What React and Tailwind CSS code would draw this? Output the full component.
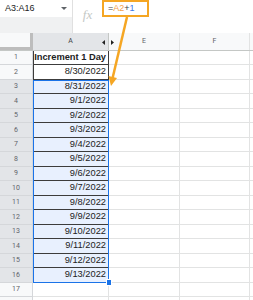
const DATES = [
  '8/30/2022', '8/31/2022', '9/1/2022', '9/2/2022', '9/3/2022', '9/4/2022', '9/5/2022',
  '9/6/2022', '9/7/2022', '9/8/2022', '9/9/2022', '9/10/2022', '9/11/2022', '9/12/2022', '9/13/2022',
]

function Row({ n, children, selected, bordered, bold }) {
  return (
    <div className="flex h-[14.5px] shrink-0">
      <div
        className={`flex w-[33px] shrink-0 items-center justify-center border-r border-b border-[#d5d7da] font-['Roboto',sans-serif] text-[7px] text-[#5f6368] ${
          selected ? 'bg-[#e3e5e8]' : 'bg-[#f8f9fa]'
        }`}
      >
        {n}
      </div>
      <div
        className={`flex w-[76px] shrink-0 items-center justify-end pr-[2px] text-[9.3px] leading-none text-[#222] ${
          bordered ? 'border-r border-b border-l border-[#3c3c3c]' : 'border-r border-b border-[#e2e3e3]'
        } ${selected ? 'bg-[#e8f0fe]' : 'bg-white'} ${bold ? 'font-bold' : ''}`}
      >
        {children}
      </div>
      <div className="w-[71px] shrink-0 border-r border-b border-[#e2e3e3]" />
      <div className="w-[70px] shrink-0 border-r border-b border-[#e2e3e3]" />
      <div className="flex-1 border-b border-[#e2e3e3]" />
    </div>
  )
}

export default function App() {
  return (
    <div className="relative h-[300px] w-[253px] overflow-hidden bg-white font-['Liberation_Sans',Arial,sans-serif]">
      {/* formula bar */}
      <div className="flex h-[33px]">
        <div className="flex w-[72px] flex-col">
          <div className="flex h-[17px] items-center justify-between bg-white pl-[5px] pr-[5px] text-[9px] text-[#222]">
            <span>A3:A16</span>
            <svg width="6" height="3" viewBox="0 0 6 3">
              <path d="M0 0h6L3 3z" fill="#5f6368" />
            </svg>
          </div>
          <div className="flex-1 bg-[#f0f1f2]" />
        </div>
        <div className="w-px bg-[#e0e0e0]" />
        <div className="flex w-[29px] items-start justify-center pt-[8px]">
          <span className="font-['Liberation_Serif',serif] text-[13px] italic leading-none text-[#c4c7c5]">fx</span>
        </div>
        <div className="flex-1">
          <div className="flex h-[17px] w-[47px] items-center border-2 border-[#f5a623] pl-[4px] text-[9px] leading-none">
            <span className="text-[#444]">=</span>
            <span className="text-[#f4a04a]">A2</span>
            <span className="text-[#444]">+</span>
            <span className="text-[#3b78e7]">1</span>
          </div>
        </div>
      </div>

      {/* column headers */}
      <div className="flex h-[17.5px] border-b border-[#c4c7c5]">
        <div className="w-[33px] shrink-0 border-r-[3.5px] border-b-[3px] border-[#bdbdbd] bg-[#f8f9fa]" />
        <div className="relative flex w-[76px] shrink-0 items-center justify-center border-r border-[#c4c7c5] bg-[#e3e5e8] font-['Roboto',sans-serif] text-[7px] text-[#444]">
          A
          <svg className="absolute right-[3px] top-[6.5px]" width="3" height="5" viewBox="0 0 3 5">
            <path d="M3 0v5L0 2.5z" fill="#222" />
          </svg>
        </div>
        <div className="relative flex w-[71px] shrink-0 items-center justify-center border-r border-[#e2e3e3] bg-[#f8f9fa] font-['Roboto',sans-serif] text-[7px] text-[#5f6368]">
          E
          <svg className="absolute left-[2px] top-[6.5px]" width="3" height="5" viewBox="0 0 3 5">
            <path d="M0 0v5L3 2.5z" fill="#222" />
          </svg>
        </div>
        <div className="flex w-[70px] shrink-0 items-center justify-center border-r border-[#e2e3e3] bg-[#f8f9fa] font-['Roboto',sans-serif] text-[7px] text-[#5f6368]">
          F
        </div>
        <div className="flex-1 bg-[#f8f9fa]" />
      </div>

      {/* rows */}
      <Row n={1} bordered bold>Increment 1 Day</Row>
      {DATES.map((d, i) => (
        <Row key={d} n={i + 2} bordered selected={i > 0}>
          {d}
        </Row>
      ))}
      <Row n={17} />
      <Row n="" />

      {/* selection outline */}
      <div className="pointer-events-none absolute left-[33px] top-[79.5px] h-[203px] w-[76px] border border-[#1a73e8]" />
      <div className="pointer-events-none absolute left-[106.5px] top-[280px] h-[4.5px] w-[4.5px] bg-[#1a73e8] outline outline-1 outline-white" />

      {/* callout arrow */}
      <svg className="pointer-events-none absolute left-0 top-0" width="253" height="300" viewBox="0 0 253 300">
        <line x1="127" y1="17" x2="112.6" y2="78" stroke="#f5a623" strokeWidth="2.5" />
        <polygon points="111,86 108.5,76 117,78" fill="#f5a623" />
      </svg>
    </div>
  )
}
